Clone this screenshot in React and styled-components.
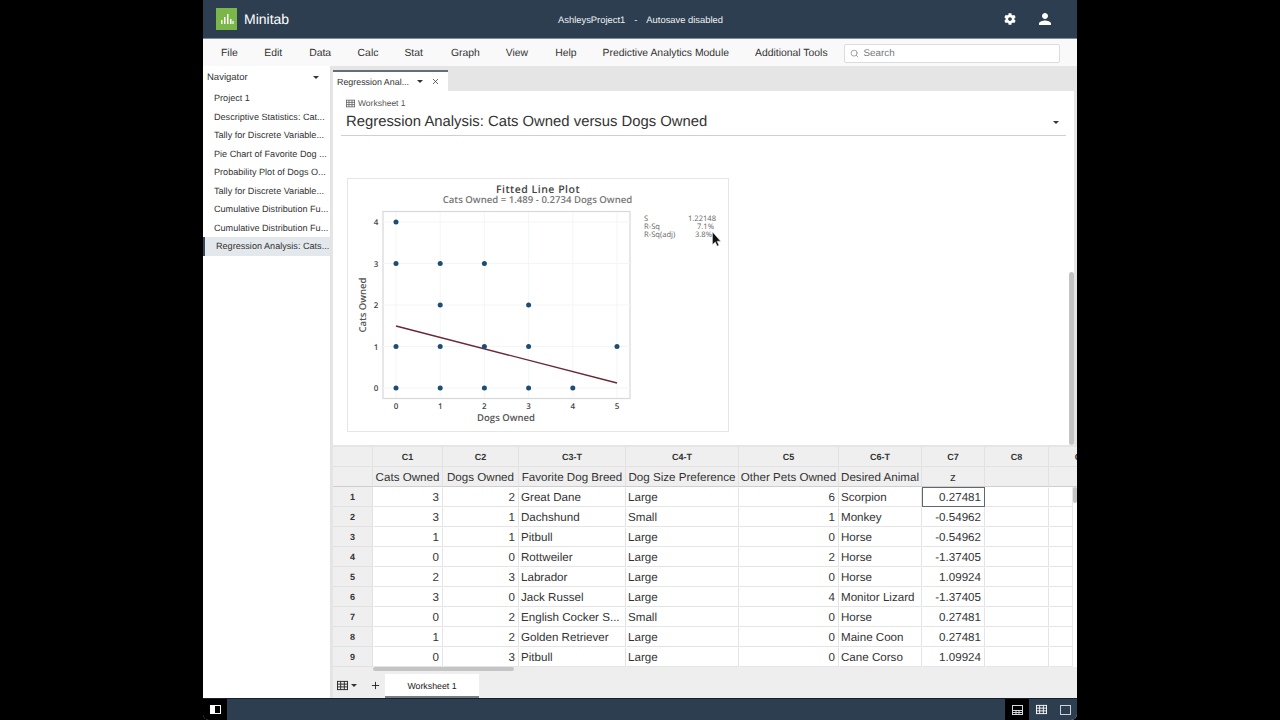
import React from "react";
import styled, { createGlobalStyle } from "styled-components";
import { FaCog } from "react-icons/fa";
import { MdPerson } from "react-icons/md";
import { Search, Plus, X } from "lucide-react";

const GlobalStyle = createGlobalStyle`
  html, body {
    margin: 0;
    height: 100%;
    background: #000;
    overflow: hidden;
    text-rendering: geometricPrecision;
  }
  * { box-sizing: border-box; }
`;

const Window = styled.div`
  margin-left: 203px;
  width: 874px;
  height: 720px;
  display: flex;
  flex-direction: column;
  background: #fff;
  font-family: "Liberation Sans", Arial, sans-serif;
  color: #333;
  border-radius: 0 0 6px 6px;
  overflow: hidden;
`;

const TopBar = styled.header`
  height: 39px;
  flex: none;
  display: flex;
  align-items: center;
  padding: 0 23px 1px 13px;
  background: #2c3e50;
  border-bottom: 1px solid #7d8b97;
  color: #fff;
`;

const Brand = styled.div`
  display: flex;
  align-items: center;
  gap: 7px;
  width: 342px;
  font-size: 14px;
`;

const ProjectInfo = styled.div`
  display: flex;
  gap: 9px;
  margin-top: 2px;
  font-size: 9.4px;
  color: #eef1f3;
`;

const TopIcons = styled.div`
  margin-left: auto;
  display: flex;
  align-items: center;
  gap: 20px;
`;

const MenuBar = styled.nav`
  height: 27px;
  flex: none;
  display: flex;
  align-items: center;
  padding: 2px 0 0 18px;
  background: #f9f9f9;
  font-size: 10.4px;
  color: #333;
`;

const MenuItem = styled.span`
  margin-right: ${(p) => p.$gap}px;
  white-space: nowrap;
`;

const SearchBox = styled.div`
  width: 216px;
  height: 19px;
  margin: -1px 0 0 -10px;
  display: flex;
  align-items: center;
  gap: 5px;
  padding-left: 5px;
  background: #fff;
  border: 1px solid #dcdcdc;
  border-radius: 2px;
  font-size: 9.8px;
  color: #777;
`;

const Body = styled.div`
  flex: 1;
  min-height: 0;
  display: flex;
`;

const Navigator = styled.aside`
  width: 128px;
  flex: none;
  background: #fff;
  border-right: 1px solid #e2e2e2;
  font-size: 9.1px;
`;

const NavHeader = styled.div`
  height: 23px;
  display: flex;
  align-items: center;
  justify-content: space-between;
  padding: 0 11px 0 4px;
  font-size: 9.5px;
`;

const Caret = styled.span`
  width: 0;
  height: 0;
  border-left: 3px solid transparent;
  border-right: 3px solid transparent;
  border-top: 3px solid ${(p) => p.$color || "#333"};
`;

const NavItem = styled.div`
  height: 18.5px;
  display: flex;
  align-items: center;
  white-space: nowrap;
  padding-left: 11px;
  background: ${(p) => (p.$active ? "#e3e8ec" : "transparent")};
  border-left: ${(p) => (p.$active ? "2px solid #3a4754" : "none")};
`;

const Workspace = styled.main`
  flex: 1;
  min-width: 0;
  display: flex;
  flex-direction: column;
  padding-left: 2px;
  background: #e5e5e5;
`;

const TabStrip = styled.div`
  height: 25px;
  flex: none;
  display: flex;
  align-items: flex-end;
`;

const ActiveTab = styled.div`
  width: 115px;
  height: 21px;
  display: flex;
  align-items: center;
  padding: 0 8px 0 4px;
  background: #fff;
  border-top: 2px solid #666d74;
  font-size: 8.9px;
  white-space: nowrap;
`;

const OutputPane = styled.section`
  position: relative;
  height: 354px;
  flex: none;
  margin-right: 3px;
  padding: 0 8px;
  background: #fff;
`;

const PaneHeading = styled.div`
  height: 45px;
  border-bottom: 1px solid #cfcfcf;
  padding: 7px 5px 0;
`;

const SheetLabel = styled.div`
  display: flex;
  align-items: center;
  gap: 3px;
  font-size: 8.5px;
  color: #555;
`;

const TitleRow = styled.div`
  display: flex;
  align-items: center;
  justify-content: space-between;
  margin-top: 6px;
  padding-right: 2px;
`;

const Title = styled.h1`
  margin: 0;
  font-size: 14.85px;
  font-weight: 400;
  color: #333;
`;

const ChartCard = styled.div`
  width: 382px;
  height: 254px;
  margin: 42px 0 0 6px;
  border: 1px solid #e6e6e6;
`;

const PaneScroll = styled.div`
  position: absolute;
  right: 0;
  bottom: 0;
  width: 5px;
  height: 173px;
  border-radius: 3px;
  background: #c4c4c4;
`;

const Sheet = styled.section`
  position: relative;
  height: 224px;
  flex: none;
  margin-top: 2px;
  overflow: hidden;
  background: #eeeeee;
`;

const SheetGrid = styled.div`
  display: grid;
  grid-template-columns: 40px 70px 76px 107px 113px 100px 83px 63px 64px 64px;
  grid-auto-rows: 20px;
  width: 780px;
  font-size: 11.6px;
  color: #333;
`;

const HeadCell = styled.div`
  display: flex;
  align-items: center;
  justify-content: center;
  padding-top: ${(p) => (p.$top ? 1 : 0)}px;
  background: #efefef;
  border-right: 1px solid #e2e2e2;
  border-bottom: 1px solid ${(p) => (p.$strong ? "#cfcfcf" : "#e2e2e2")};
  font-size: ${(p) => (p.$small ? 9 : 11.6)}px;
  font-weight: ${(p) => (p.$small ? 700 : 400)};
  white-space: nowrap;
`;

const Cell = styled.div`
  display: flex;
  align-items: center;
  justify-content: ${(p) => (p.$text ? "flex-start" : "flex-end")};
  padding: 0 3px 0 1px;
  background: #fff;
  border: 1px solid ${(p) => (p.$selected ? "#5f666c" : "transparent")};
  border-right-color: ${(p) => (p.$selected ? "#5f666c" : "#e4e4e4")};
  border-bottom-color: ${(p) => (p.$selected ? "#5f666c" : "#e4e4e4")};
  white-space: nowrap;
`;

const HorizontalThumb = styled.div`
  position: absolute;
  left: 40px;
  bottom: 0;
  width: 141px;
  height: 4px;
  border-radius: 2px;
  background: #c4c4c4;
`;

const VerticalLane = styled.div`
  position: absolute;
  right: 0;
  top: 40px;
  width: 5px;
  height: 180px;
  background: #fff;
  border-left: 1px solid #e8e8e8;
`;

const VerticalThumb = styled.div`
  width: 4px;
  height: 16px;
  border-radius: 2px;
  background: #c4c4c4;
`;

const SheetTabs = styled.div`
  height: 27px;
  flex: none;
  display: flex;
  align-items: flex-start;
  padding-left: 4px;
  background: #eeeeee;
`;

const SheetTools = styled.div`
  width: 48px;
  height: 29px;
  display: flex;
  align-items: center;
  gap: 3px;
  color: #222;
`;

const SheetTab = styled.div`
  width: 94px;
  height: 24px;
  margin-top: 3px;
  display: flex;
  align-items: center;
  justify-content: center;
  padding-top: 1px;
  background: #fff;
  border-bottom: 2px solid #777f86;
  font-size: 8.8px;
  color: #222;
`;

const BottomBar = styled.footer`
  height: 22px;
  flex: none;
  display: flex;
  align-items: stretch;
  background: #2c3e50;
  border-top: 1px solid #15202b;
`;

const BarButton = styled.div`
  width: 24px;
  display: flex;
  align-items: center;
  justify-content: center;
  background: ${(p) => (p.$active ? "#000" : "transparent")};
`;

const BarRight = styled.div`
  margin-left: auto;
  display: flex;
`;

const navItems = [
  "Project 1",
  "Descriptive Statistics: Cat...",
  "Tally for Discrete Variable...",
  "Pie Chart of Favorite Dog ...",
  "Probability Plot of Dogs O...",
  "Tally for Discrete Variable...",
  "Cumulative Distribution Fu...",
  "Cumulative Distribution Fu...",
];

const menus = [
  ["File", 26.5],
  ["Edit", 27],
  ["Data", 26.5],
  ["Calc", 26],
  ["Stat", 28],
  ["Graph", 26],
  ["View", 27],
  ["Help", 26],
  ["Predictive Analytics Module", 26],
  ["Additional Tools", 26],
];

const columns = ["C1", "C2", "C3-T", "C4-T", "C5", "C6-T", "C7", "C8", "C9"];
const names = [
  "Cats Owned",
  "Dogs Owned",
  "Favorite Dog Breed",
  "Dog Size Preference",
  "Other Pets Owned",
  "Desired Animal",
  "z",
  "",
  "",
];

const rows = [
  [3, 2, "Great Dane", "Large", 6, "Scorpion", "0.27481"],
  [3, 1, "Dachshund", "Small", 1, "Monkey", "-0.54962"],
  [1, 1, "Pitbull", "Large", 0, "Horse", "-0.54962"],
  [0, 0, "Rottweiler", "Large", 2, "Horse", "-1.37405"],
  [2, 3, "Labrador", "Large", 0, "Horse", "1.09924"],
  [3, 0, "Jack Russel", "Large", 4, "Monitor Lizard", "-1.37405"],
  [0, 2, "English Cocker S...", "Small", 0, "Horse", "0.27481"],
  [1, 2, "Golden Retriever", "Large", 0, "Maine Coon", "0.27481"],
  [0, 3, "Pitbull", "Large", 0, "Cane Corso", "1.09924"],
];

const points = [
  [0, 4], [0, 3], [1, 3], [2, 3], [1, 2], [3, 2], [0, 1], [1, 1], [2, 1],
  [3, 1], [5, 1], [0, 0], [1, 0], [2, 0], [3, 0], [4, 0],
];

const px = (x) => 396 + x * 44.2;
const py = (y) => 388 - y * 41.5;

const GridIcon = ({ size = 11, color = "currentColor" }) => (
  <svg width={size} height={size} viewBox="0 0 12 12" fill="none" stroke={color} strokeWidth="1">
    <rect x="0.5" y="1.5" width="11" height="9" />
    <path d="M0.5 4.5h11M0.5 7.5h11M4 1.5v9M8 1.5v9" />
  </svg>
);

const LogoMark = () => (
  <svg width="21" height="22" viewBox="0 0 21 22">
    <rect width="21" height="22" fill="#7ab648" />
    <path d="M5 12h1.5v4H5zM8 9h1.5v7H8zM11 6h1.5v10H11zM14 11h1.5v5H14zM16.4 13h1.2v3h-1.2z" fill="#fff" />
  </svg>
);

const FittedLinePlot = () => (
  <svg width="380" height="252" viewBox="348 179 380 252" fontFamily="'Open Sans', sans-serif">
    <text x="538" y="193" textAnchor="middle" fontSize="10.5" fontWeight="600" letterSpacing="0.5" fill="#444">
      Fitted Line Plot
    </text>
    <text x="537.5" y="203" textAnchor="middle" fontSize="9.6" fontWeight="600" fill="#777">
      Cats Owned = 1.489 - 0.2734 Dogs Owned
    </text>
    <rect x="383" y="211.5" width="247" height="187" fill="#fff" stroke="#d8d8d8" strokeWidth="1.2" />
    {[0, 1, 2, 3, 4, 5].map((x) => (
      <line key={x} x1={px(x)} x2={px(x)} y1="212" y2="398" stroke="#f4f5f6" />
    ))}
    {[0, 1, 2, 3, 4].map((y) => (
      <line key={y} x1="383" x2="630" y1={py(y)} y2={py(y)} stroke="#f4f5f6" />
    ))}
    {[0, 1, 2, 3, 4, 5].map((x) => (
      <text key={x} x={px(x)} y="409" textAnchor="middle" fontSize="8" fontWeight="600" fill="#444">
        {x}
      </text>
    ))}
    {[0, 1, 2, 3, 4].map((y) => (
      <text key={y} x="376" y={py(y) + 3} textAnchor="middle" fontSize="8" fontWeight="600" fill="#444">
        {y}
      </text>
    ))}
    <text x="506" y="421" textAnchor="middle" fontSize="9.5" fontWeight="600" fill="#555">
      Dogs Owned
    </text>
    <text transform="translate(366 305) rotate(-90)" textAnchor="middle" fontSize="9.5" fontWeight="600" fill="#555">
      Cats Owned
    </text>
    <line x1="396" y1="326" x2="617" y2="383" stroke="#6b2737" strokeWidth="1.4" />
    {points.map(([x, y]) => (
      <circle key={`${x}-${y}`} cx={px(x)} cy={py(y)} r="2.5" fill="#1d4d73" />
    ))}
    <g fontSize="7.6" fill="#666">
      <text x="644" y="220.5">S</text>
      <text x="644" y="228.5">R-Sq</text>
      <text x="644" y="236.5">R-Sq(adj)</text>
      <text x="716" y="220.5" textAnchor="end">1.22148</text>
      <text x="714" y="228.5" textAnchor="end">7.1%</text>
      <text x="712" y="236.5" textAnchor="end">3.8%</text>
    </g>
    {/* mouse pointer sitting on the stats table */}
    <path d="M712.5 232v12.5l2.8-2.6 1.9 4.2 1.7-.8-1.9-4.1h3.6z" fill="#111" stroke="#ddd" strokeWidth="0.5" />
  </svg>
);

const App = () => (
  <>
    <GlobalStyle />
    <Window>
      <TopBar>
        <Brand>
          <LogoMark />
          Minitab
        </Brand>
        <ProjectInfo>
          <span>AshleysProject1</span>
          <span>-</span>
          <span>Autosave disabled</span>
        </ProjectInfo>
        <TopIcons>
          <FaCog size={12} color="#fff" />
          <MdPerson size={18} color="#fff" />
        </TopIcons>
      </TopBar>
      <MenuBar>
        {menus.map(([label, gap]) => (
          <MenuItem key={label} $gap={gap}>
            {label}
          </MenuItem>
        ))}
        <SearchBox>
          <Search size={9} color="#888" />
          Search
        </SearchBox>
      </MenuBar>
      <Body>
        <Navigator>
          <NavHeader>
            Navigator
            <Caret />
          </NavHeader>
          {navItems.map((item, i) => (
            <NavItem key={i}>{item}</NavItem>
          ))}
          <NavItem $active>Regression Analysis: Cats...</NavItem>
        </Navigator>
        <Workspace>
          <TabStrip>
            <ActiveTab>
              Regression Anal...
              <Caret style={{ marginLeft: 8 }} />
              <X size={9} strokeWidth={2} style={{ marginLeft: "auto" }} />
            </ActiveTab>
          </TabStrip>
          <OutputPane>
            <PaneHeading>
              <SheetLabel>
                <GridIcon size={9} />
                Worksheet 1
              </SheetLabel>
              <TitleRow>
                <Title>Regression Analysis: Cats Owned versus Dogs Owned</Title>
                <Caret />
              </TitleRow>
            </PaneHeading>
            <ChartCard>
              <FittedLinePlot />
            </ChartCard>
            <PaneScroll />
          </OutputPane>
          <Sheet>
            <SheetGrid>
              <HeadCell />
              {columns.map((c) => (
                <HeadCell key={c} $small $top>
                  {c}
                </HeadCell>
              ))}
              <HeadCell $strong />
              {names.map((n, i) => (
                <HeadCell key={i} $strong $top>
                  {n}
                </HeadCell>
              ))}
              {rows.map((row, r) => (
                <React.Fragment key={r}>
                  <HeadCell $small>{r + 1}</HeadCell>
                  {row.map((value, c) => (
                    <Cell key={c} $text={typeof value === "string" && c < 6} $selected={r === 0 && c === 6}>
                      {value}
                    </Cell>
                  ))}
                  <Cell />
                  <Cell />
                </React.Fragment>
              ))}
            </SheetGrid>
            <HorizontalThumb />
            <VerticalLane>
              <VerticalThumb />
            </VerticalLane>
          </Sheet>
          <SheetTabs>
            <SheetTools>
              <GridIcon size={11} />
              <Caret />
              <Plus size={11} strokeWidth={2} style={{ marginLeft: 10 }} />
            </SheetTools>
            <SheetTab>Worksheet 1</SheetTab>
          </SheetTabs>
        </Workspace>
      </Body>
      <BottomBar>
        <BarButton $active>
          <svg width="11" height="9" viewBox="0 0 11 9">
            <rect x="0.5" y="0.5" width="10" height="8" fill="none" stroke="#fff" />
            <rect x="0" y="0" width="5" height="9" fill="#fff" />
          </svg>
        </BarButton>
        <BarRight>
          <BarButton $active>
            <svg width="11" height="10" viewBox="0 0 11 10" fill="none" stroke="#d5dade">
              <rect x="0.5" y="0.5" width="10" height="9" />
              <path d="M0.5 5.5h10M0.5 7.5h10M4 5.5v4M7 5.5v4" />
            </svg>
          </BarButton>
          <BarButton>
            <GridIcon size={11} color="#fff" />
          </BarButton>
          <BarButton>
            <svg width="11" height="10" viewBox="0 0 11 10" fill="none" stroke="#cdd3d8">
              <rect x="0.5" y="0.5" width="10" height="9" />
            </svg>
          </BarButton>
        </BarRight>
      </BottomBar>
    </Window>
  </>
);

export default App;
